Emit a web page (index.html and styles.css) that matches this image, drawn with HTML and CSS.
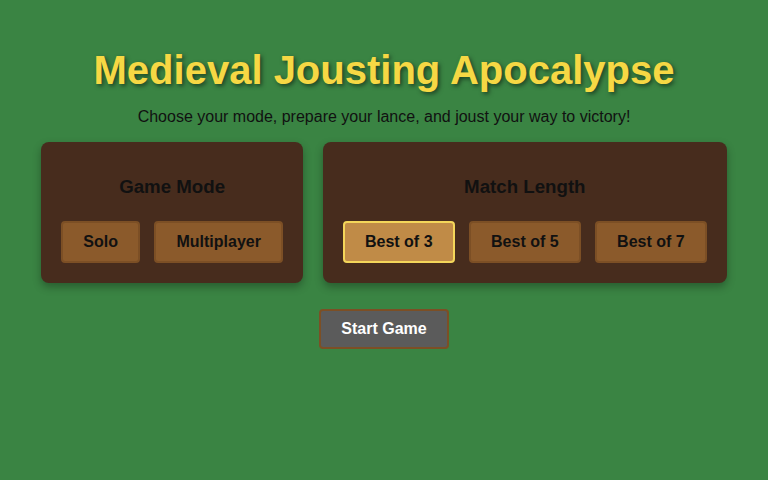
FILE: index.html
```html
<!DOCTYPE html>
<html lang="en">
  <head>
    <meta charset="UTF-8" />
    <meta name="viewport" content="width=device-width, initial-scale=1.0" />
    <title>Medieval Jousting Apocalypse</title>
    <link rel="stylesheet" href="styles.css">
  </head>
  <body>
    <h1 class="title">Medieval Jousting Apocalypse</h1>
    <p class="tagline">Choose your mode, prepare your lance, and joust your way to victory!</p>

    <div class="options">
      <div class="panel">
        <h2>Game Mode</h2>
        <div class="choices">
          <button class="choice" data-mode="solo">Solo</button>
          <button class="choice" data-mode="multi">Multiplayer</button>
        </div>
      </div>

      <div class="panel">
        <h2>Match Length</h2>
        <div class="choices">
          <button class="choice selected" data-rounds="3">Best of 3</button>
          <button class="choice" data-rounds="5">Best of 5</button>
          <button class="choice" data-rounds="7">Best of 7</button>
        </div>
      </div>
    </div>

    <button id="startButton" class="start">Start Game</button>
  </body>
</html>
```

FILE: styles.css
```css
body {
  font-family: 'Liberation Sans', Arial, sans-serif;
  text-align: center;
  margin: 0;
  padding: 40px 20px;
  background-color: #3a8443;
  color: #111;
}

.title {
  font-size: 40px;
  line-height: 60px;
  margin: 0 0 8px;
  color: #f6d844;
  text-shadow: 2px 2px 4px rgba(0, 0, 0, 0.5);
}

.tagline {
  font-size: 16px;
  line-height: 18px;
  margin: 0 0 16px;
}

.options {
  display: flex;
  justify-content: center;
  gap: 20px;
}

.panel {
  background-color: #472c1d;
  border-radius: 8px;
  padding: 20px;
  box-shadow: 0 4px 8px rgba(0, 0, 0, 0.3);
}

.panel h2 {
  font-size: 18.7px;
  line-height: 22px;
  margin: 14px 0 23px;
  color: #111;
}

.choices {
  display: flex;
  gap: 14.5px;
}

.choice {
  font-family: inherit;
  font-size: 16px;
  font-weight: bold;
  line-height: 18px;
  padding: 10px 20px;
  background-color: #8b5a2b;
  color: #111;
  border: 2px solid #7c4f25;
  border-radius: 4px;
  cursor: pointer;
}

.choice.selected {
  background-color: #c08b47;
  border-color: #f4d65a;
}

.start {
  font-family: inherit;
  font-size: 16px;
  font-weight: bold;
  line-height: 18px;
  margin-top: 26px;
  padding: 9px 20px;
  background-color: #5b5b5b;
  color: #fff;
  border: 2px solid #7c4f25;
  border-radius: 4px;
  cursor: pointer;
}
```
